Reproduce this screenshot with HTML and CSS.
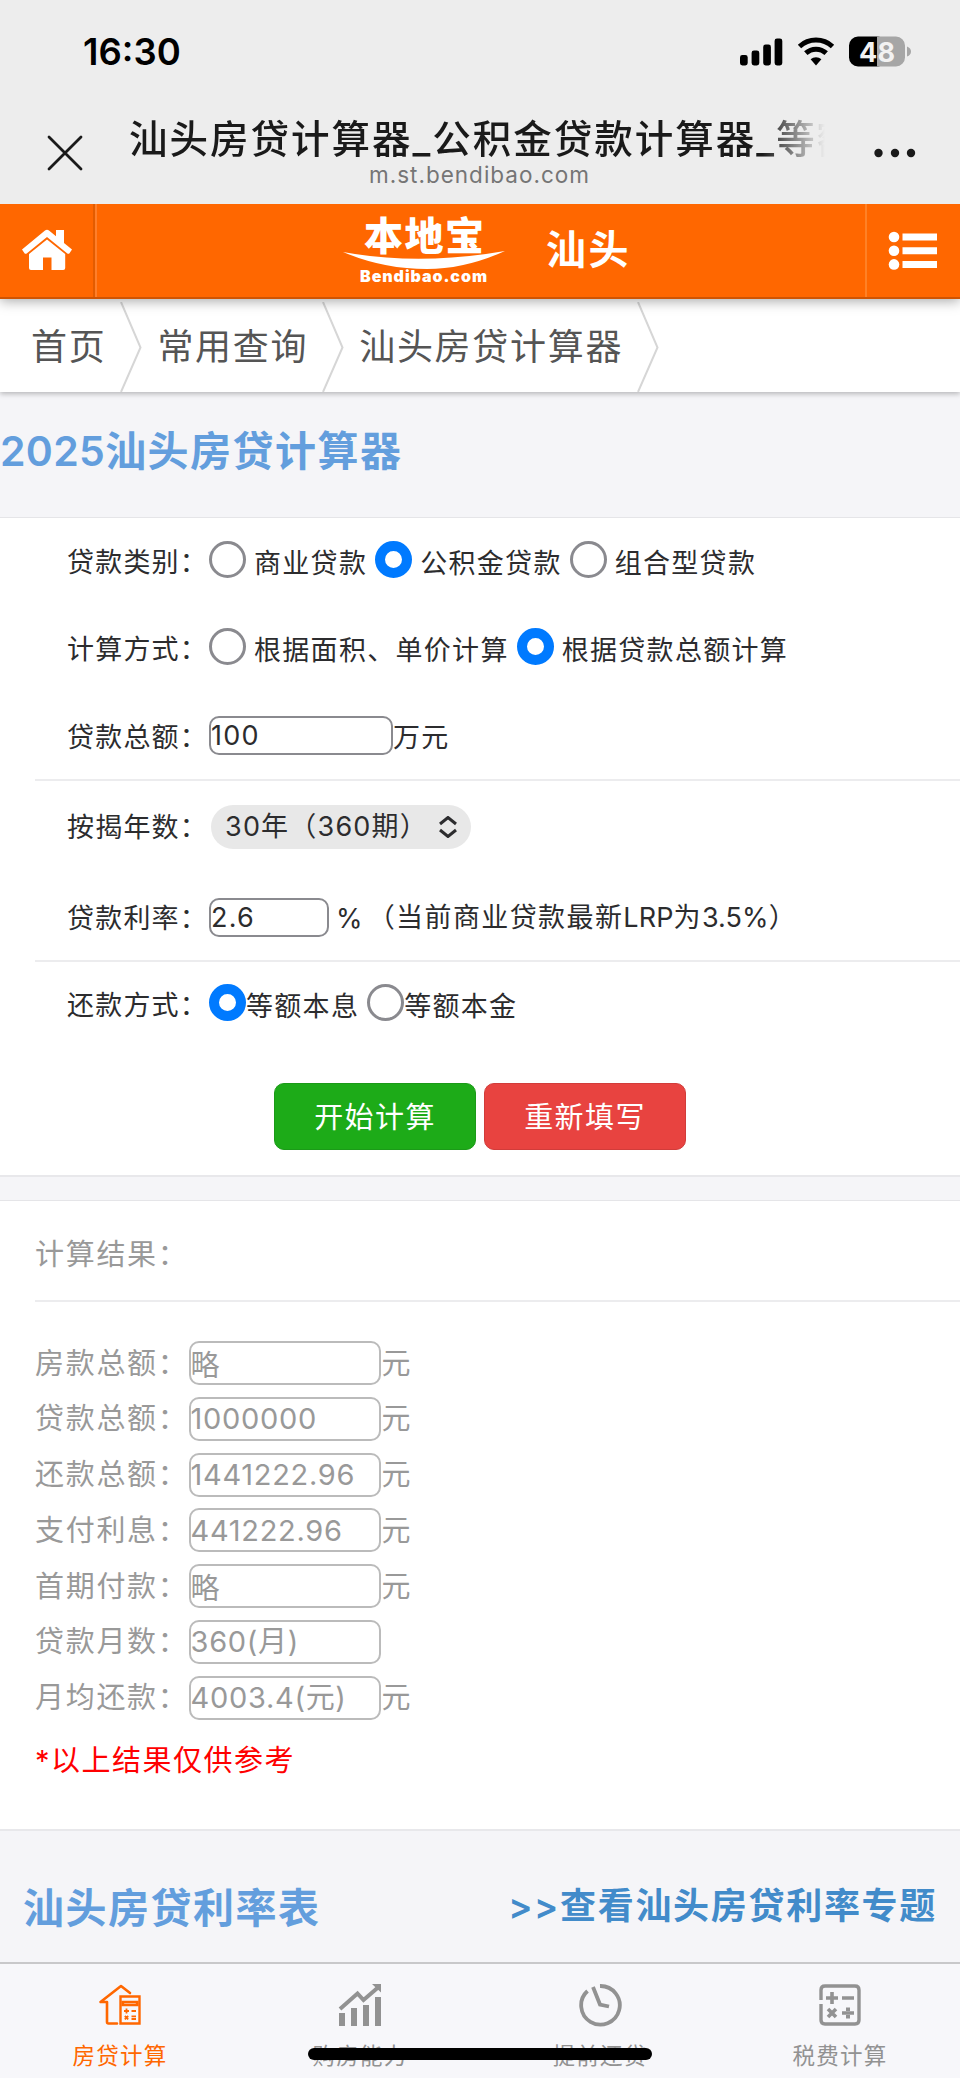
FILE: index.html
```html
<!DOCTYPE html>
<html lang="zh-CN">
<head>
  <meta charset="UTF-8" />
  <meta name="viewport" content="width=device-width, initial-scale=1.0"/>
  <title>汕头房贷计算器_公积金贷款计算器</title>
  <link rel="stylesheet" href="styles.css">
</head>
<body>
  <!-- Status bar -->
  <div class="status">
    <span class="time">16:30</span>
    <svg class="status-icons" width="172" height="32" viewBox="0 0 172 32">
      <rect x="0" y="19" width="7.7" height="10.5" rx="2.4"/>
      <rect x="11.6" y="14.5" width="7.7" height="15" rx="2.4"/>
      <rect x="23.2" y="8.5" width="7.7" height="21" rx="2.4"/>
      <rect x="34.6" y="2.5" width="7.7" height="27" rx="2.4"/>
      <path d="M59.5 10.500a24.500 24.500 0 0 1 33 0M65.800 17.200a15 15 0 0 1 20.400 0" fill="none" stroke="#000" stroke-width="5"/>
      <path d="M70.600 23.300a8 8 0 0 1 10.800 0L76 29.500z"/>
      <path d="M118 .5h20a9 9 0 0 1 9 9v12a9 9 0 0 1-9 9h-20a9 9 0 0 1-9-9v-12a9 9 0 0 1 9-9z"/>
      <path class="battery-rest" d="M137 .5h19a9 9 0 0 1 9 9v12a9 9 0 0 1-9 9h-19zM167 10.500q4 1.500 4 5t-4 5z"/>
      <text class="battery-num" x="119" y="25.500" textLength="36">48</text>
    </svg>
  </div>

  <!-- Browser title -->
  <div class="browser">
    <svg class="close" width="36" height="36" viewBox="0 0 36 36"><path d="M2 2l32 32M34 2L2 34"/></svg>
    <div class="page-title">
      <div class="page-name">汕头房贷计算器_公积金贷款计算器_等额</div>
      <div class="page-host">m.st.bendibao.com</div>
    </div>
    <svg class="more" width="42" height="10" viewBox="0 0 42 10"><circle cx="4.500" cy="5" r="4.200"/><circle cx="21" cy="5" r="4.200"/><circle cx="37" cy="5" r="4.200"/></svg>
  </div>

  <header class="header">
    <a class="home">
      <svg width="52" height="42" viewBox="0 0 52 42">
        <path d="M1 20.500L24 1.500q2-1.500 4 0l7 5.800V1h8v13l8 6.500-2.500 3.800q-1 1-2.500 0L26 8 6 24.300q-1.500 1-2.500 0z"/>
        <path d="M26 10.500L44.200 25v14q0 2-2 2H30.500V28.500h-8.500V41H10q-2 0-2-2V25z"/>
      </svg>
    </a>
    <div class="brand">
      <svg class="logo" width="164" height="72" viewBox="0 0 164 72">
        <text class="logo-cn" x="21" y="36" textLength="120">本地宝</text>
        <path d="M0 38Q76 52 162 37Q122 55 84 55Q40 55 0 38z"/>
        <text class="logo-en" x="17" y="68" textLength="127">Bendibao.com</text>
      </svg>
      <span class="city">汕头</span>
    </div>
    <a class="menu">
      <svg width="50" height="40" viewBox="0 0 50 40">
        <circle cx="6" cy="6" r="5.300"/><circle cx="6" cy="19.700" r="5.300"/><circle cx="6" cy="33.400" r="5.300"/>
        <path d="M14.500 2.500H49v7H14.500zM14.500 16.200H49v7H14.500zM14.500 29.900H49v7H14.500z"/>
      </svg>
    </a>
  </header>

  <nav class="crumbs">
    <a>首页</a>
    <svg width="22" height="90" viewBox="0 0 22 90"><path d="M1 0l19.500 45.500L1 90"/></svg>
    <a>常用查询</a>
    <svg width="22" height="90" viewBox="0 0 22 90"><path d="M1 0l19.500 45.500L1 90"/></svg>
    <a>汕头房贷计算器</a>
    <svg width="22" height="90" viewBox="0 0 22 90"><path d="M1 0l19.500 45.500L1 90"/></svg>
  </nav>

  <h1 class="heading"><span class="year">2025</span>汕头房贷计算器</h1>

  <!-- Calculator form -->
  <form class="panel form">
    <div class="row row-type">
      <span class="label">贷款类别：</span>
      <input type="radio" name="type"><span class="opt">商业贷款</span>
      <input type="radio" name="type" checked><span class="opt">公积金贷款</span>
      <input type="radio" name="type"><span class="opt">组合型贷款</span>
    </div>
    <div class="row row-mode">
      <span class="label">计算方式：</span>
      <input type="radio" name="mode"><span class="opt">根据面积、单价计算</span>
      <input type="radio" name="mode" checked><span class="opt">根据贷款总额计算</span>
    </div>
    <div class="row row-amount line">
      <span class="label">贷款总额：</span>
      <input type="text" class="amount" value="100"><span class="unit">万元</span>
    </div>
    <div class="row row-years">
      <span class="label">按揭年数：</span>
      <div class="select">
        <span>30年（360期）</span>
        <svg width="20" height="22" viewBox="0 0 20 22"><path d="M2 8l8-6.500L18 8M2 14l8 6.500L18 14"/></svg>
      </div>
    </div>
    <div class="row row-rate line">
      <span class="label">贷款利率：</span>
      <input type="text" class="rate" value="2.6"><span class="percent">%</span><span class="rate-tip">（当前商业贷款最新<span class="num">LRP</span>为<span class="num">3.5%</span>）</span>
    </div>
    <div class="row row-repay">
      <span class="label">还款方式：</span>
      <input type="radio" name="repay" checked><span class="opt tight">等额本息</span>
      <input type="radio" name="repay"><span class="opt tight">等额本金</span>
    </div>
    <div class="buttons">
      <button type="button" class="btn start">开始计算</button>
      <button type="reset" class="btn reset">重新填写</button>
    </div>
  </form>

  <!-- Result -->
  <section class="panel result">
    <h2 class="result-title">计算结果：</h2>
    <div class="result-list">
      <div class="result-row"><span>房款总额：</span><input type="text" value="略"><span>元</span></div>
      <div class="result-row"><span>贷款总额：</span><input type="text" value="1000000"><span>元</span></div>
      <div class="result-row"><span>还款总额：</span><input type="text" value="1441222.96"><span>元</span></div>
      <div class="result-row"><span>支付利息：</span><input type="text" value="441222.96"><span>元</span></div>
      <div class="result-row"><span>首期付款：</span><input type="text" value="略"><span>元</span></div>
      <div class="result-row"><span>贷款月数：</span><input type="text" class="mixed" value="360(月)"></div>
      <div class="result-row"><span>月均还款：</span><input type="text" class="mixed" value="4003.4(元)"><span>元</span></div>
    </div>
    <p class="note">*以上结果仅供参考</p>
  </section>

  <div class="rates">
    <h2 class="rates-title">汕头房贷利率表</h2>
    <a class="rates-link">&gt;&gt;查看汕头房贷利率专题</a>
  </div>

  <!-- Bottom tabs -->
  <footer class="tabs">
    <a class="tab active">
      <svg width="44" height="44" viewBox="0 0 44 44">
        <path d="M32 10L23 3 2.500 19H9v20q0 1.500 1.500 1.500H19" stroke-width="2.600" stroke-linecap="round" stroke-linejoin="round"/>
        <path d="M22.500 13.500h19v27h-19zM25 19h14v3H25z" stroke-width="2.400"/>
        <path d="M26 28h5M28.500 25.500v5M33.500 28H38M26.800 33l3.400 3.400M30.200 33l-3.400 3.400M33.500 33.300H38M33.500 36H38" stroke-width="1.800"/>
      </svg>
      <span>房贷计算</span>
    </a>
    <a class="tab">
      <svg width="44" height="44" viewBox="0 0 44 44">
        <path d="M2 26l17.500-15.500 6 6.500L40 4.500" stroke-width="4"/>
        <path class="solid" d="M34 1h9v8.500zM1 30h6v13H1zM13 25h6v18h-6zM25 22h6v21h-6zM37 14h6v29h-6z"/>
      </svg>
      <span>购房能力</span>
    </a>
    <a class="tab">
      <svg width="44" height="44" viewBox="0 0 44 44">
        <path d="M22 3A19.300 19.300 0 1 1 9.500 8" stroke-width="3.800"/>
        <path d="M15 4l7 17.500 9 2" stroke-width="3.800"/>
      </svg>
      <span>提前还贷</span>
    </a>
    <a class="tab">
      <svg width="44" height="44" viewBox="0 0 44 44">
        <path d="M3 17V7q0-4 4-4h30q4 0 4 4v30q0 4-4 4H7q-4 0-4-4V21" stroke-width="3.400"/>
        <path d="M8 15h12M14 9v12M24 15h12M10 26l8 8M18 26l-8 8M24 30h12" stroke-width="3.600"/>
        <path class="solid" d="M28 24.500h4v3.500h-4zM28 32h4v3.500h-4z"/>
      </svg>
      <span>税费计算</span>
    </a>
    <div class="home-bar"></div>
  </footer>
</body>
</html>
```

FILE: styles.css
```css
* {
  box-sizing: border-box;
}

body {
  margin: 0;
  width: 960px;
  height: 2078px;
  overflow: hidden;
  display: flex;
  flex-direction: column;
  background: #f5f5f8;
  color: #2c2c2e;
  font-family: Inter, "Noto Sans CJK SC", sans-serif;
  font-size: 27px;
  line-height: 1;
  letter-spacing: 1.2px;
  white-space: nowrap;
}

h1, h2, p {
  margin: 0;
}

input {
  font: inherit;
  letter-spacing: inherit;
  color: inherit;
  margin: 0;
}

/* status bar */
.status {
  display: flex;
  justify-content: space-between;
  align-items: center;
  height: 106px;
  padding: 0 48px 0 83px;
  background: #ededed;
  color: #000;
}

.time {
  margin-bottom: 2px;
  font-size: 36.5px;
  font-weight: 600;
  letter-spacing: 0;
}

.status-icons {
  margin-bottom: 2px;
}

.battery-rest {
  fill: #a6a6a6;
}

.battery-num {
  font-size: 27px;
  font-weight: 700;
  letter-spacing: 0;
  fill: #f2f2f2;
}

/* browser title */
.browser {
  position: relative;
  z-index: 2;
  display: flex;
  height: 98px;
  background: #ededed;
  color: #1a1a1a;
}

.close {
  margin: 29px 0 0 47px;
  fill: none;
  stroke: #1a1a1a;
  stroke-width: 2.8;
  stroke-linecap: round;
}

.page-title {
  width: 696px;
  margin-left: 46px;
  padding-top: 13px;
}

.page-name {
  height: 40px;
  line-height: 40px;
  overflow: hidden;
  font-size: 38.5px;
  font-weight: 500;
  letter-spacing: 2px;
  -webkit-mask-image: linear-gradient(to right, #000 91%, transparent);
  mask-image: linear-gradient(to right, #000 91%, transparent);
}

.page-host {
  margin-top: 3px;
  padding-left: 5px;
  line-height: 26px;
  text-align: center;
  font-size: 22.5px;
  letter-spacing: 1px;
  color: #757575;
}

.more {
  margin: 42px 0 0 49px;
  fill: #1a1a1a;
}

/* orange header */
.header {
  position: relative;
  z-index: 1;
  display: flex;
  height: 95px;
  background: #ff6700;
  border-bottom: 2px solid #cf5403;
  box-shadow: 0 2px 12px rgba(0, 0, 0, 0.35);
  fill: #fff;
}

.home {
  width: 97px;
  padding: 25px 0 0 21px;
  border-right: 2px solid #ff7f2a;
  box-shadow: inset -2px 0 0 #e35c00;
}

.brand {
  flex: 1;
  display: flex;
  padding: 10px 0 0 246px;
}

.logo {
  overflow: visible;
}

.logo-cn {
  font-size: 39px;
  font-weight: 900;
  letter-spacing: 0;
}

.logo-en {
  font-size: 16px;
  font-weight: 900;
  letter-spacing: 0;
}

.city {
  margin: 16px 0 0 39px;
  font-size: 40px;
  font-weight: 700;
  letter-spacing: 2.4px;
  color: #fff;
}

.menu {
  width: 95px;
  padding: 27px 0 0 21px;
  border-left: 2px solid #ff8126;
}

/* breadcrumb */
.crumbs {
  display: flex;
  align-items: center;
  height: 93px;
  padding: 0 0 0 31px;
  background: #fff;
  box-shadow: 0 2px 5px rgba(0, 0, 0, 0.25);
  font-size: 36px;
  letter-spacing: 1.7px;
  color: #555;
}

.crumbs a {
  padding-top: 2px;
}

.crumbs svg {
  align-self: flex-end;
  margin: 0 15px 0 14px;
  fill: none;
  stroke: #d6d6d6;
  stroke-width: 2;
}

.heading {
  height: 125px;
  padding-top: 39px;
  font-size: 41px;
  line-height: 41px;
  font-weight: 600;
  letter-spacing: 1.5px;
  color: #639edd;
}

.year {
  letter-spacing: 0.3px;
}

.panel {
  background: #fff;
  border-top: 1px solid #e5e5e8;
  border-bottom: 2px solid #e8e8eb;
}

/* form */
.form {
  height: 660px;
  padding-left: 35px;
}

.row {
  display: flex;
  align-items: center;
  height: 88px;
  padding-left: 32px;
}

.row-type {
  height: 84px;
}

.row .label {
  width: 142px;
  padding-top: 5px;
}

.line {
  border-bottom: 2px solid #ececee;
}

.row input[type="radio"] {
  appearance: none;
  flex: none;
  width: 37px;
  height: 37px;
  margin-right: 8px;
  margin-bottom: 1px;
  border: 3px solid #8a8a8f;
  border-radius: 50%;
  background: #fff;
}

.row input[type="radio"]:checked {
  border: 10.5px solid #007aff;
}

.opt {
  margin-right: 8px;
  padding-top: 7px;
  letter-spacing: 1.3px;
}

input[type="radio"] + .tight {
  margin-left: -8px;
}

input[type="text"] {
  border: 2px solid #8a8a8f;
  border-radius: 10px;
  background: #fff;
  outline: none;
}

.row input[type="text"] {
  height: 39px;
  padding: 0;
}

.row-mode {
  height: 90px;
}

.row-amount {
  height: 89px;
}

.row-amount .label,
.unit {
  padding-top: 3px;
}

.amount {
  width: 184px;
}

.row-years {
  height: 91px;
}

.row-years .label {
  padding-top: 1px;
}

.select {
  display: flex;
  align-items: center;
  justify-content: space-between;
  width: 260px;
  height: 44px;
  margin-left: 2px;
  padding: 0 13px 0 14px;
  border-radius: 22px;
  background: #e8e8e8;
}

.select svg {
  fill: none;
  stroke: #2c2c2e;
  stroke-width: 3;
}

.row-rate {
  height: 90px;
  padding-top: 2px;
}

.row-rate .label {
  padding-top: 2px;
}

.rate {
  width: 120px;
}

.percent {
  margin-left: 7px;
  padding-top: 2px;
}

.rate-tip {
  padding: 1px 0 0 4px;
  letter-spacing: 1.4px;
}

.rate-tip .num {
  letter-spacing: 0.1px;
}

.row-repay {
  height: 81px;
}

.buttons {
  display: flex;
  gap: 8px;
  padding: 40px 0 0 239px;
}

.btn {
  width: 202px;
  height: 67px;
  padding: 1px 0 0;
  border-radius: 10px;
  font: inherit;
  font-size: 29px;
  letter-spacing: 1.4px;
  color: #fff;
}

.start {
  background: #1dab18;
  border: 1px solid #1b9a18;
}

.reset {
  background: #e84340;
  border: 1px solid #d13c3a;
}

/* result */
.result {
  height: 631px;
  margin-top: 23px;
  padding-left: 35px;
  font-size: 29px;
  letter-spacing: 1.7px;
  color: #999;
}

.result-title {
  height: 101px;
  line-height: 107px;
  font-size: 29px;
  font-weight: 400;
  border-bottom: 2px solid #ececee;
}

.result-list {
  display: flex;
  flex-direction: column;
  gap: 11.75px;
  padding-top: 39px;
}

.result-row {
  display: flex;
  align-items: center;
  height: 44px;
}

.result-row input {
  width: 192px;
  height: 44px;
  margin-right: 1px;
  padding: 0;
  border-color: #bbb;
  letter-spacing: 0.7px;
}

.result-row .mixed {
  padding-bottom: 5px;
}

.note {
  margin-top: 26px;
  letter-spacing: 1.5px;
  color: #f00;
}

/* rates */
.rates {
  display: flex;
  justify-content: space-between;
  height: 131px;
  padding: 57px 23px 0 23px;
}

.rates-title {
  font-size: 41px;
  font-weight: 600;
  letter-spacing: 1.5px;
  color: #639edd;
}

.rates-link {
  font-size: 36px;
  font-weight: 600;
  letter-spacing: 1.7px;
  color: #428bca;
}

/* bottom tabs */
.tabs {
  position: relative;
  display: flex;
  height: 116px;
  border-top: 2px solid #c8c8ca;
  background: #f7f7fa;
}

.tab {
  width: 25%;
  display: flex;
  flex-direction: column;
  align-items: center;
  padding-top: 19px;
  font-size: 22.5px;
  letter-spacing: 1.2px;
  color: #929292;
}

.tab span {
  margin-top: 18px;
}

.tab svg {
  fill: none;
  stroke: currentColor;
}

.tab .solid {
  fill: currentColor;
  stroke: none;
}

.active {
  color: #ff6700;
}

.home-bar {
  position: absolute;
  left: 308px;
  bottom: 18px;
  width: 344px;
  height: 12px;
  border-radius: 6px;
  background: #000;
}
```
